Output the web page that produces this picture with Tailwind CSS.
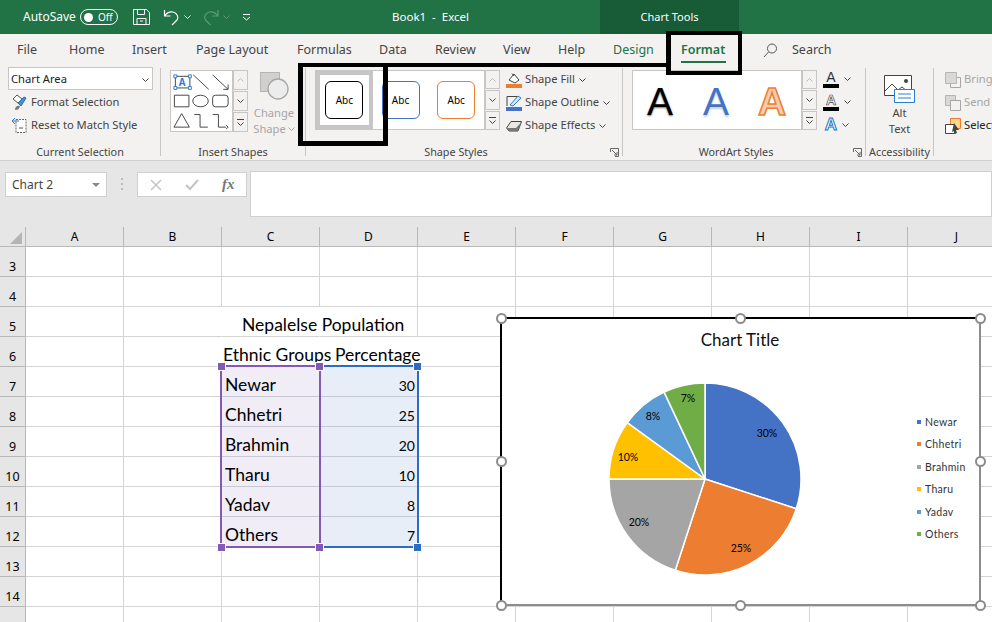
<!DOCTYPE html>
<html lang="en">
<head>
  <meta charset="UTF-8" />
  <title>Book1 - Excel</title>
  <script src="https://cdn.jsdelivr.net/npm/@tailwindcss/browser@4"></script>
</head>
<body class="overflow-hidden">
<div class="relative w-[992px] h-[622px] overflow-hidden bg-white font-['Noto_Sans',sans-serif] text-[#444]">

  <!-- title bar -->
  <div class="flex h-[34px] bg-[#217346] text-white text-[12px] items-center">
    <span class="ml-[23px] w-[57px]">AutoSave</span>
    <div class="flex items-center w-[38px] h-[16px] rounded-full border border-white px-[3px] gap-[5px]">
      <span class="w-[9px] h-[9px] rounded-full bg-white"></span><span class="text-[10px] leading-none">Off</span>
    </div>
    <svg class="ml-[15px]" width="17" height="18" viewBox="0 0 17 18" fill="none" stroke="#fff"><path d="M.5 1.5h13l3 3v12H.5z"/><path d="M4.5 1.5v5h7v-5M4 16.5v-6h9v6M7 13h3"/></svg>
    <svg class="ml-[13px]" width="18" height="18" viewBox="0 0 18 18" fill="none" stroke="#fff" stroke-width="1.2"><path d="M1.5 2v6h6M1.5 8C4 4.500 7 3.500 10 4c4 1 6 5 4 8l-5 5"/></svg>
    <svg class="ml-[3px]" width="7" height="4" viewBox="0 0 7 4" fill="none" stroke="#fff"><path d="M.5.500l3 3 3-3"/></svg>
    <svg class="ml-[11px]" width="18" height="18" viewBox="0 0 18 18" fill="none" stroke="#5c9a78" stroke-width="1.2"><path d="M16 2v6h-6M16 8c-2.500-3.500-5.500-4.500-8.500-4-4 1-6 5-4 8l5 5"/></svg>
    <svg class="ml-[3px]" width="7" height="4" viewBox="0 0 7 4" fill="none" stroke="#5c9a78"><path d="M.5.500l3 3 3-3"/></svg>
    <svg class="ml-[12px]" width="9" height="7" viewBox="0 0 9 7" fill="none" stroke="#fff"><path d="M1 .5h7M1 3l3.500 3L8 3"/></svg>
    <span class="ml-[141px] w-[208px] text-[11.5px]">Book1 &nbsp;-&nbsp; Excel</span>
    <div class="flex h-full w-[139px] items-center justify-center bg-[#185c37] text-[11px]">Chart Tools</div>
  </div>

  <!-- tabs -->
  <div class="flex h-[32px] items-center bg-[#f3f2f1] pl-[17px] text-[12.5px]">
    <span class="w-[52px]">File</span>
    <span class="w-[63px]">Home</span>
    <span class="w-[64px]">Insert</span>
    <span class="w-[101px]">Page Layout</span>
    <span class="w-[82px]">Formulas</span>
    <span class="w-[56px]">Data</span>
    <span class="w-[68px]">Review</span>
    <span class="w-[55px]">View</span>
    <span class="w-[55px]">Help</span>
    <span class="w-[68px] text-[#217346]">Design</span>
    <span class="relative w-[82px] font-semibold text-[#217346]">Format<span class="absolute left-0 top-[20px] h-[2px] w-[45px] bg-[#217346]"></span></span>
    <svg width="15" height="15" viewBox="0 0 15 15" fill="none" stroke="#555"><circle cx="9" cy="5.500" r="4.500"/><path d="M5.500 9 1 14"/></svg>
    <span class="ml-[14px]">Search</span>
  </div>

  <!-- ribbon -->
  <div class="flex h-[95px] border-b border-[#d2d0ce] bg-[#f3f2f1] text-[11.2px]">

    <!-- current selection -->
    <div class="flex w-[160px] flex-col">
      <div class="flex-1 pl-[8px] pt-[1px]">
        <div class="flex h-[23px] w-[145px] items-center justify-between border border-[#c8c6c4] bg-white px-[2px] pt-[2px] text-[#222]">Chart Area
          <svg class="mr-px" width="7" height="4" viewBox="0 0 7 4" fill="none" stroke="#444"><path d="M.5.500l3 3 3-3"/></svg>
        </div>
        <div class="flex h-[23px] items-center gap-[3px] pl-[3px] pt-[2px]">
          <svg width="17" height="17" viewBox="0 0 17 17" fill="none"><path d="M2 5l4-4 5 4-4 4z" fill="#fff" stroke="#555"/><path d="M7 9l6-6 2 1-5 8z" fill="#4a90d0" stroke="#2b6cb0"/><path d="M4 16c0-3 2-5 5-4-1 3-2 4-5 4z" fill="#777"/></svg>
          Format Selection
        </div>
        <div class="flex h-[23px] items-center gap-[3px] pl-[3px] pt-[2px]">
          <svg width="17" height="17" viewBox="0 0 17 17" fill="none"><path d="M5 2.500h10v13H5z" fill="#fff" stroke="#666" stroke-dasharray="2 1"/><path d="M1 4h7M4 1 1 4l3 3" stroke="#2b7cd3"/><path d="M8 11h4" stroke="#555"/></svg>
          Reset to Match Style
        </div>
      </div>
      <div class="h-[16px] text-center text-[10.8px] leading-[16px]">Current Selection</div>
    </div>
    <div class="mt-[2px] h-[88px] w-px bg-[#c8c6c4]"></div>

    <!-- insert shapes -->
    <div class="flex w-[144px] flex-col">
      <div class="flex flex-1 pl-[9px] pt-[4px]">
        <svg class="border border-[#c8c6c4] bg-white" width="63" height="62" viewBox="0 0 63 62" fill="none" stroke="#444">
          <path d="M4.500 5.500h15v12h-15z"/><path d="M3 4h3v3H3zM18 4h3v3h-3zM3 16h3v3H3zM18 16h3v3h-3z" fill="#fff" stroke="#2b7cd3"/>
          <text x="8" y="15" font-size="10" font-weight="700" fill="#2b7cd3" stroke="none">A</text>
          <path d="M23 4l16 15M43 4l16 15M59 19h-5M59 19v-5"/>
          <path d="M3.500 25h15v12h-15z"/><ellipse cx="30.500" cy="31" rx="8" ry="6"/><rect x="43" y="25" width="16" height="12" rx="3"/>
          <path d="M3 58l8-14 8 14zM24 45h6v13h8M43 45h6v13h8M57 56l2 2-2 2"/>
        </svg>
        <div class="flex h-[62px] w-[15px] flex-col gap-px">
          <div class="flex flex-1 items-center justify-center border border-[#c8c6c4]"><svg width="7" height="4" viewBox="0 0 7 4" fill="none" stroke="#bbb"><path d="M.5 3.500l3-3 3 3"/></svg></div>
          <div class="flex flex-1 items-center justify-center border border-[#c8c6c4]"><svg width="7" height="4" viewBox="0 0 7 4" fill="none" stroke="#444"><path d="M.5.500l3 3 3-3"/></svg></div>
          <div class="flex flex-1 flex-col items-center justify-center gap-[2px] border border-[#c8c6c4]"><span class="h-px w-[7px] bg-[#444]"></span><svg width="7" height="4" viewBox="0 0 7 4" fill="none" stroke="#444"><path d="M.5.500l3 3 3-3"/></svg></div>
        </div>
        <div class="ml-[2px] flex w-[48px] flex-col items-center leading-[16px] text-[#a6a6a6]">
          <svg class="mt-[2px] mb-[5px]" width="29" height="28" viewBox="0 0 29 28"><rect x=".5" y=".5" width="19" height="19" fill="#d0d0d0" stroke="#b5b5b5"/><circle cx="18" cy="17" r="10" fill="#ececec" stroke="#a6a6a6" stroke-width="1.300"/></svg>
          <span>Change</span>
          <span class="flex items-center gap-[2px]">Shape <svg width="7" height="4" viewBox="0 0 7 4" fill="none" stroke="#a6a6a6"><path d="M.5.500l3 3 3-3"/></svg></span>
        </div>
      </div>
      <div class="h-[16px] text-center text-[10.8px] leading-[16px]">Insert Shapes</div>
    </div>
    <div class="mt-[2px] h-[88px] w-px bg-[#c8c6c4]"></div>

    <!-- shape styles -->
    <div class="relative flex w-[316px] flex-col">
      <div class="flex flex-1 pl-[9px] pt-[4px]">
        <div class="flex h-[60px] w-[170px] border border-[#c8c6c4] bg-white text-[10px] text-black">
          <div class="flex h-[58px] w-[57px] items-center justify-center border-[4px] border-[#c6c6c6] bg-white"><div class="flex size-[38px] items-center justify-center rounded-[6px] border border-black">Abc</div></div>
          <div class="flex w-[56px] items-center justify-center"><div class="flex size-[38px] items-center justify-center rounded-[6px] border border-[#4472c4]">Abc</div></div>
          <div class="flex w-[56px] items-center justify-center"><div class="flex size-[38px] items-center justify-center rounded-[6px] border border-[#ed7d31]">Abc</div></div>
        </div>
        <div class="flex h-[60px] w-[15px] flex-col gap-px">
          <div class="flex flex-1 items-center justify-center border border-[#c8c6c4]"><svg width="7" height="4" viewBox="0 0 7 4" fill="none" stroke="#bbb"><path d="M.5 3.500l3-3 3 3"/></svg></div>
          <div class="flex flex-1 items-center justify-center border border-[#c8c6c4]"><svg width="7" height="4" viewBox="0 0 7 4" fill="none" stroke="#444"><path d="M.5.500l3 3 3-3"/></svg></div>
          <div class="flex flex-1 flex-col items-center justify-center gap-[2px] border border-[#c8c6c4]"><span class="h-px w-[7px] bg-[#444]"></span><svg width="7" height="4" viewBox="0 0 7 4" fill="none" stroke="#444"><path d="M.5.500l3 3 3-3"/></svg></div>
        </div>
        <div class="ml-[6px] -mt-[3px]">
          <div class="flex h-[23px] items-center gap-[3px] pt-[2px]">
            <svg width="16" height="16" viewBox="0 0 16 16" fill="none"><path d="M3 8l5-6 5 6-4 3z" fill="#fff" stroke="#444"/><path d="M6 1.500 8 4" stroke="#444"/><rect y="12" width="16" height="4" fill="#ed7d31"/></svg>
            Shape Fill<svg class="ml-[1px]" width="7" height="4" viewBox="0 0 7 4" fill="none" stroke="#444"><path d="M.5.500l3 3 3-3"/></svg>
          </div>
          <div class="flex h-[23px] items-center gap-[3px] pt-[2px]">
            <svg width="16" height="16" viewBox="0 0 16 16" fill="none"><path d="M1 11V1.500h10" stroke="#444"/><path d="M4 10 12 1l3 2-8 8z" fill="#cfe6fa" stroke="#2b7cd3"/><rect y="12" width="16" height="4" fill="#4472c4"/></svg>
            Shape Outline<svg class="ml-[1px]" width="7" height="4" viewBox="0 0 7 4" fill="none" stroke="#444"><path d="M.5.500l3 3 3-3"/></svg>
          </div>
          <div class="flex h-[23px] items-center gap-[3px] pt-[2px]">
            <svg width="16" height="16" viewBox="0 0 16 16"><path d="M.5 10 5 3.500h10.500L12 13H3z" fill="#e8e8e8" stroke="#444"/><path d="M1 10h9l5.500-6L12 13H3z" fill="#777"/></svg>
            Shape Effects<svg class="ml-[1px]" width="7" height="4" viewBox="0 0 7 4" fill="none" stroke="#444"><path d="M.5.500l3 3 3-3"/></svg>
          </div>
        </div>
      </div>
      <div class="h-[16px] pr-[16px] text-center text-[10.8px] leading-[16px]">Shape Styles</div>
      <svg class="absolute bottom-[3px] right-[3px]" width="9" height="9" viewBox="0 0 9 9" fill="none" stroke="#666"><path d="M.5 4V.5H8.500v8H5M2 2l5 5M4 7h3V4"/></svg>
    </div>
    <div class="mt-[2px] h-[88px] w-px bg-[#c8c6c4]"></div>

    <!-- wordart -->
    <div class="relative flex w-[242px] flex-col">
      <div class="flex flex-1 pl-[9px] pt-[4px]">
        <div class="flex h-[60px] w-[170px] items-center border border-[#c8c6c4] bg-white pt-[2px] font-['Liberation_Sans',sans-serif] text-[39px] leading-none">
          <span class="w-[54px] text-center text-black [text-shadow:0_1px_2px_#0008]">A</span>
          <span class="w-[58px] text-center text-[#4472c4] [text-shadow:0_2px_2px_#4472c455]">A</span>
          <span class="w-[54px] text-center font-bold text-[#f8cbad] [-webkit-text-stroke:1.500px_#ed7d31]">A</span>
        </div>
        <div class="flex h-[60px] w-[15px] flex-col gap-px">
          <div class="flex flex-1 items-center justify-center border border-[#c8c6c4]"><svg width="7" height="4" viewBox="0 0 7 4" fill="none" stroke="#bbb"><path d="M.5 3.500l3-3 3 3"/></svg></div>
          <div class="flex flex-1 items-center justify-center border border-[#c8c6c4]"><svg width="7" height="4" viewBox="0 0 7 4" fill="none" stroke="#444"><path d="M.5.500l3 3 3-3"/></svg></div>
          <div class="flex flex-1 flex-col items-center justify-center gap-[2px] border border-[#c8c6c4]"><span class="h-px w-[7px] bg-[#444]"></span><svg width="7" height="4" viewBox="0 0 7 4" fill="none" stroke="#444"><path d="M.5.500l3 3 3-3"/></svg></div>
        </div>
        <div class="ml-[6px] -mt-[3px] font-['Liberation_Sans',sans-serif] text-[14px] leading-none">
          <div class="flex h-[23px] items-center gap-[5px]">
            <span class="w-[16px] border-b-[4px] border-black text-center leading-[14px] text-[#333]">A</span><svg width="7" height="4" viewBox="0 0 7 4" fill="none" stroke="#444"><path d="M.5.500l3 3 3-3"/></svg>
          </div>
          <div class="flex h-[23px] items-center gap-[5px]">
            <span class="w-[16px] border-b-[4px] border-black text-center leading-[14px] font-bold text-white [-webkit-text-stroke:.7px_#444]">A</span><svg width="7" height="4" viewBox="0 0 7 4" fill="none" stroke="#444"><path d="M.5.500l3 3 3-3"/></svg>
          </div>
          <div class="flex h-[23px] items-center gap-[3px]">
            <span class="w-[16px] text-center text-[17px] font-bold text-white [-webkit-text-stroke:1px_#1a75c9]">A</span><svg width="7" height="4" viewBox="0 0 7 4" fill="none" stroke="#444"><path d="M.5.500l3 3 3-3"/></svg>
          </div>
        </div>
      </div>
      <div class="h-[16px] pr-[16px] text-center text-[10.8px] leading-[16px]">WordArt Styles</div>
      <svg class="absolute bottom-[3px] right-[3px]" width="9" height="9" viewBox="0 0 9 9" fill="none" stroke="#666"><path d="M.5 4V.5H8.500v8H5M2 2l5 5M4 7h3V4"/></svg>
    </div>
    <div class="mt-[2px] h-[88px] w-px bg-[#c8c6c4]"></div>

    <!-- accessibility -->
    <div class="flex w-[67px] flex-col">
      <div class="flex flex-1 flex-col items-center pt-[9px] leading-[16px]">
        <svg class="mb-[2px]" width="31" height="28" viewBox="0 0 31 28" fill="none"><path d="M.5.500h27v20H.5z" stroke="#444" fill="#fff"/><path d="M1 16l7-7 6 6 4-3 5 4" stroke="#444"/><circle cx="22" cy="6" r="2" fill="#444"/><path d="M10.500 14.500h20v13h-20z" fill="#fff" stroke="#2b7cd3"/><path d="M14 19h13M14 23h13" stroke="#2b7cd3"/></svg>
        <span>Alt</span><span>Text</span>
      </div>
      <div class="h-[16px] text-center text-[10.8px] leading-[16px]">Accessibility</div>
    </div>
    <div class="mt-[2px] h-[88px] w-px bg-[#c8c6c4]"></div>

    <!-- arrange, cut by the window -->
    <div class="flex-1 overflow-hidden pl-[11px] pt-[1px] whitespace-nowrap">
      <div class="flex h-[23px] items-center gap-[3px] pt-[2px] text-[#a6a6a6]"><svg class="shrink-0" width="16" height="16" viewBox="0 0 16 16"><path d="M5.500 5.500h10v10h-10z" fill="none" stroke="#a6a6a6"/><path d="M.5.500h11v11H.5z" fill="#d8d8d8" stroke="#b5b5b5"/></svg>Bring Forward</div>
      <div class="flex h-[23px] items-center gap-[3px] pt-[2px] text-[#a6a6a6]"><svg class="shrink-0" width="16" height="16" viewBox="0 0 16 16"><path d="M.5.500h10v10H.5z" fill="#d8d8d8" stroke="#b5b5b5"/><path d="M5.500 5.500h10v10h-10z" fill="#f3f2f1" stroke="#a6a6a6"/></svg>Send Backward</div>
      <div class="flex h-[23px] items-center gap-[3px] pt-[2px] text-[#222]"><svg class="shrink-0" width="16" height="16" viewBox="0 0 16 16"><path d="M5.500.5h10v10h-10z" fill="#ffd98a" stroke="#ed7d31"/><path d="M.5 6.500h9v9h-9z" fill="#fff" stroke="#444"/><path d="M9 5l5 7h-3l1 3-2 1-1-3-2 1z" fill="#444"/></svg>Selection Pane</div>
    </div>
  </div>

  <!-- formula bar -->
  <div class="flex h-[66px] bg-[#e6e6e6] text-[12px]">
    <div class="ml-[5px] mt-[11px] flex h-[25px] w-[102px] items-center justify-between border border-[#d0d0d0] bg-white pl-[6px] pr-[6px]">Chart 2
      <svg width="8" height="4" viewBox="0 0 8 4"><path d="M0 0h8L4 4z" fill="#888"/></svg>
    </div>
    <div class="ml-[14px] mt-[17px] flex h-[12px] flex-col justify-between"><span class="size-[2px] bg-[#bbb]"></span><span class="size-[2px] bg-[#bbb]"></span><span class="size-[2px] bg-[#bbb]"></span></div>
    <div class="ml-[14px] mt-[11px] flex h-[25px] w-[110px] items-center border border-[#d0d0d0] bg-white">
      <svg class="ml-[12px]" width="12" height="12" viewBox="0 0 12 12" fill="none" stroke="#c4c4c4" stroke-width="1.500"><path d="M1 1l10 10M11 1 1 11"/></svg>
      <svg class="ml-[23px]" width="14" height="12" viewBox="0 0 14 12" fill="none" stroke="#c4c4c4" stroke-width="2"><path d="M1 6l4 4 8-9"/></svg>
      <span class="ml-[23px] font-['Liberation_Serif',serif] text-[15px] font-bold italic text-[#777]">fx</span>
    </div>
    <div class="ml-[3px] mt-[10px] h-[46px] flex-1 border border-[#d0d0d0] bg-white"></div>
  </div>

  <!-- sheet -->
  <div class="grid grid-cols-[26px_repeat(10,98px)] grid-rows-[20px] auto-rows-[30px] font-['Lato',sans-serif] text-[17.5px] leading-[22px] text-black [&>div]:flex [&>div]:items-end [&>div]:border-r [&>div]:border-b [&>div]:border-[#d4d4d4]">
    <div class="relative !border-[#b8b8b8] bg-[#e6e6e6]"><svg class="absolute left-[10px] top-[5px]" width="12" height="12" viewBox="0 0 12 12"><path d="M12 0v12H0z" fill="#b4b4b4"/></svg></div>
    <div class="!items-center justify-center !border-[#b8b8b8] bg-[#e6e6e6] font-['Noto_Sans'] text-[12px]">A</div>
    <div class="!items-center justify-center !border-[#b8b8b8] bg-[#e6e6e6] font-['Noto_Sans'] text-[12px]">B</div>
    <div class="!items-center justify-center !border-[#b8b8b8] bg-[#e6e6e6] font-['Noto_Sans'] text-[12px]">C</div>
    <div class="!items-center justify-center !border-[#b8b8b8] bg-[#e6e6e6] font-['Noto_Sans'] text-[12px]">D</div>
    <div class="!items-center justify-center !border-[#b8b8b8] bg-[#e6e6e6] font-['Noto_Sans'] text-[12px]">E</div>
    <div class="!items-center justify-center !border-[#b8b8b8] bg-[#e6e6e6] font-['Noto_Sans'] text-[12px]">F</div>
    <div class="!items-center justify-center !border-[#b8b8b8] bg-[#e6e6e6] font-['Noto_Sans'] text-[12px]">G</div>
    <div class="!items-center justify-center !border-[#b8b8b8] bg-[#e6e6e6] font-['Noto_Sans'] text-[12px]">H</div>
    <div class="!items-center justify-center !border-[#b8b8b8] bg-[#e6e6e6] font-['Noto_Sans'] text-[12px]">I</div>
    <div class="!items-center justify-center !border-[#b8b8b8] bg-[#e6e6e6] font-['Noto_Sans'] text-[12px]">J</div>

    <div class="justify-center !border-[#b8b8b8] bg-[#e6e6e6] font-['Noto_Sans'] text-[12.5px] leading-[18px]">3</div><div></div><div></div><div></div><div></div><div></div><div></div><div></div><div></div><div></div><div></div>
    <div class="justify-center !border-[#b8b8b8] bg-[#e6e6e6] font-['Noto_Sans'] text-[12.5px] leading-[18px]">4</div><div></div><div></div><div></div><div></div><div></div><div></div><div></div><div></div><div></div><div></div>
    <div class="justify-center !border-[#b8b8b8] bg-[#e6e6e6] font-['Noto_Sans'] text-[12.5px] leading-[18px]">5</div><div></div><div class="!border-r-transparent"></div><div class="!border-r-transparent whitespace-nowrap pl-[20px]">Nepalelse Population</div><div></div><div></div><div></div><div></div><div></div><div></div><div></div>
    <div class="justify-center !border-[#b8b8b8] bg-[#e6e6e6] font-['Noto_Sans'] text-[12.5px] leading-[18px]">6</div><div></div><div class="!border-r-transparent"></div><div class="!border-r-transparent whitespace-nowrap pl-px">Ethnic Groups</div><div class="!border-r-transparent whitespace-nowrap pl-[15px]">Percentage</div><div></div><div></div><div></div><div></div><div></div><div></div>
    <div class="justify-center !border-[#b8b8b8] bg-[#e6e6e6] font-['Noto_Sans'] text-[12.5px] leading-[18px]">7</div><div></div><div></div><div class="!border-b-[#c8c8d4] bg-[#f0edf6] pl-[3px]">Newar</div><div class="justify-end !border-b-[#c4cad6] bg-[#e8eef8] pr-[2px] text-[14px] leading-[21px]">30</div><div></div><div></div><div></div><div></div><div></div><div></div>
    <div class="justify-center !border-[#b8b8b8] bg-[#e6e6e6] font-['Noto_Sans'] text-[12.5px] leading-[18px]">8</div><div></div><div></div><div class="!border-b-[#c8c8d4] bg-[#f0edf6] pl-[3px]">Chhetri</div><div class="justify-end !border-b-[#c4cad6] bg-[#e8eef8] pr-[2px] text-[14px] leading-[21px]">25</div><div></div><div></div><div></div><div></div><div></div><div></div>
    <div class="justify-center !border-[#b8b8b8] bg-[#e6e6e6] font-['Noto_Sans'] text-[12.5px] leading-[18px]">9</div><div></div><div></div><div class="!border-b-[#c8c8d4] bg-[#f0edf6] pl-[3px]">Brahmin</div><div class="justify-end !border-b-[#c4cad6] bg-[#e8eef8] pr-[2px] text-[14px] leading-[21px]">20</div><div></div><div></div><div></div><div></div><div></div><div></div>
    <div class="justify-center !border-[#b8b8b8] bg-[#e6e6e6] font-['Noto_Sans'] text-[12.5px] leading-[18px]">10</div><div></div><div></div><div class="!border-b-[#c8c8d4] bg-[#f0edf6] pl-[3px]">Tharu</div><div class="justify-end !border-b-[#c4cad6] bg-[#e8eef8] pr-[2px] text-[14px] leading-[21px]">10</div><div></div><div></div><div></div><div></div><div></div><div></div>
    <div class="justify-center !border-[#b8b8b8] bg-[#e6e6e6] font-['Noto_Sans'] text-[12.5px] leading-[18px]">11</div><div></div><div></div><div class="!border-b-[#c8c8d4] bg-[#f0edf6] pl-[3px]">Yadav</div><div class="justify-end !border-b-[#c4cad6] bg-[#e8eef8] pr-[2px] text-[14px] leading-[21px]">8</div><div></div><div></div><div></div><div></div><div></div><div></div>
    <div class="justify-center !border-[#b8b8b8] bg-[#e6e6e6] font-['Noto_Sans'] text-[12.5px] leading-[18px]">12</div><div></div><div></div><div class="bg-[#f0edf6] pl-[3px]">Others</div><div class="justify-end bg-[#e8eef8] pr-[2px] text-[14px] leading-[21px]">7</div><div></div><div></div><div></div><div></div><div></div><div></div>
    <div class="justify-center !border-[#b8b8b8] bg-[#e6e6e6] font-['Noto_Sans'] text-[12.5px] leading-[18px]">13</div><div></div><div></div><div></div><div></div><div></div><div></div><div></div><div></div><div></div><div></div>
    <div class="justify-center !border-[#b8b8b8] bg-[#e6e6e6] font-['Noto_Sans'] text-[12.5px] leading-[18px]">14</div><div></div><div></div><div></div><div></div><div></div><div></div><div></div><div></div><div></div><div></div>
    <div class="!border-[#b8b8b8] bg-[#e6e6e6]"></div><div></div><div></div><div></div><div></div><div></div><div></div><div></div><div></div><div></div><div></div>
  </div>

  <!-- range highlights over the sheet -->
  <div class="absolute left-[220px] top-[365px] h-[183px] w-[101px] border-2 border-[#8359b5]"></div>
  <div class="absolute left-[321px] top-[365px] h-[183px] w-[98px] border-y-2 border-r-2 border-[#2e6cc4]"></div>
  <span class="absolute left-[218px] top-[363px] size-[7px] bg-[#8359b5] outline outline-white"></span>
  <span class="absolute left-[316px] top-[363px] size-[7px] bg-[#8359b5] outline outline-white"></span>
  <span class="absolute left-[218px] top-[544px] size-[7px] bg-[#8359b5] outline outline-white"></span>
  <span class="absolute left-[316px] top-[544px] size-[7px] bg-[#8359b5] outline outline-white"></span>
  <span class="absolute left-[414px] top-[363px] size-[7px] bg-[#2e6cc4] outline outline-white"></span>
  <span class="absolute left-[414px] top-[544px] size-[7px] bg-[#2e6cc4] outline outline-white"></span>

  <!-- chart -->
  <div class="absolute left-[500px] top-[317px] h-[289px] w-[481px] border-y-[2px] border-x-[2px] border-t-black border-l-black border-r-[#8c8c8c] border-b-[#8c8c8c] bg-white">
    <svg class="absolute left-0 top-0" width="477" height="285" viewBox="502 319 477 285" font-family="Lato" fill="#000">
      <text x="740" y="346" font-size="17" text-anchor="middle" fill="#111">Chart Title</text>
      <g stroke="#fff" stroke-width="1.500">
        <path d="M705 479V383A96 96 0 0 1 796.300 508.700Z" fill="#4472c4"/>
        <path d="M705 479 796.300 508.700A96 96 0 0 1 675.300 570.300Z" fill="#ed7d31"/>
        <path d="M705 479 675.300 570.300A96 96 0 0 1 609 479Z" fill="#a5a5a5"/>
        <path d="M705 479H609A96 96 0 0 1 627.300 422.600Z" fill="#ffc000"/>
        <path d="M705 479 627.300 422.600A96 96 0 0 1 664.100 392.100Z" fill="#5b9bd5"/>
        <path d="M705 479 664.100 392.100A96 96 0 0 1 705 383Z" fill="#70ad47"/>
      </g>
      <g font-size="10.500" text-anchor="middle">
        <text x="767" y="437">30%</text>
        <text x="741" y="552">25%</text>
        <text x="639" y="526">20%</text>
        <text x="628" y="461">10%</text>
        <text x="653" y="420">8%</text>
        <text x="688" y="402">7%</text>
      </g>
      <g font-size="10.500" fill="#333" letter-spacing=".3">
        <rect x="917" y="420" width="4" height="4" fill="#4472c4"/><text x="925" y="426">Newar</text>
        <rect x="917" y="442" width="4" height="4" fill="#ed7d31"/><text x="925" y="448">Chhetri</text>
        <rect x="917" y="465" width="4" height="4" fill="#a5a5a5"/><text x="925" y="471">Brahmin</text>
        <rect x="917" y="487" width="4" height="4" fill="#ffc000"/><text x="925" y="493">Tharu</text>
        <rect x="917" y="510" width="4" height="4" fill="#5b9bd5"/><text x="925" y="516">Yadav</text>
        <rect x="917" y="532" width="4" height="4" fill="#70ad47"/><text x="925" y="538">Others</text>
      </g>
    </svg>
  </div>
  <span class="absolute left-[496px] top-[313px] size-[11px] rounded-full border-2 border-[#8c8c8c] bg-white"></span>
  <span class="absolute left-[735px] top-[313px] size-[11px] rounded-full border-2 border-[#8c8c8c] bg-white"></span>
  <span class="absolute left-[975px] top-[313px] size-[11px] rounded-full border-2 border-[#8c8c8c] bg-white"></span>
  <span class="absolute left-[496px] top-[456px] size-[11px] rounded-full border-2 border-[#8c8c8c] bg-white"></span>
  <span class="absolute left-[975px] top-[456px] size-[11px] rounded-full border-2 border-[#8c8c8c] bg-white"></span>
  <span class="absolute left-[496px] top-[600px] size-[11px] rounded-full border-2 border-[#8c8c8c] bg-white"></span>
  <span class="absolute left-[735px] top-[600px] size-[11px] rounded-full border-2 border-[#8c8c8c] bg-white"></span>
  <span class="absolute left-[975px] top-[600px] size-[11px] rounded-full border-2 border-[#8c8c8c] bg-white"></span>

  <!-- black annotation boxes drawn on the screenshot -->
  <div class="absolute left-[298px] top-[63px] h-[83px] w-[90px] border-[5px] border-t-[4px] border-black"></div>
  <div class="absolute left-[298px] top-[63px] h-[4px] w-[370px] bg-black"></div>
  <div class="absolute left-[666px] top-[31px] h-[44px] w-[76px] border-[4px] border-l-[5px] border-black"></div>
</div>
</body>
</html>
